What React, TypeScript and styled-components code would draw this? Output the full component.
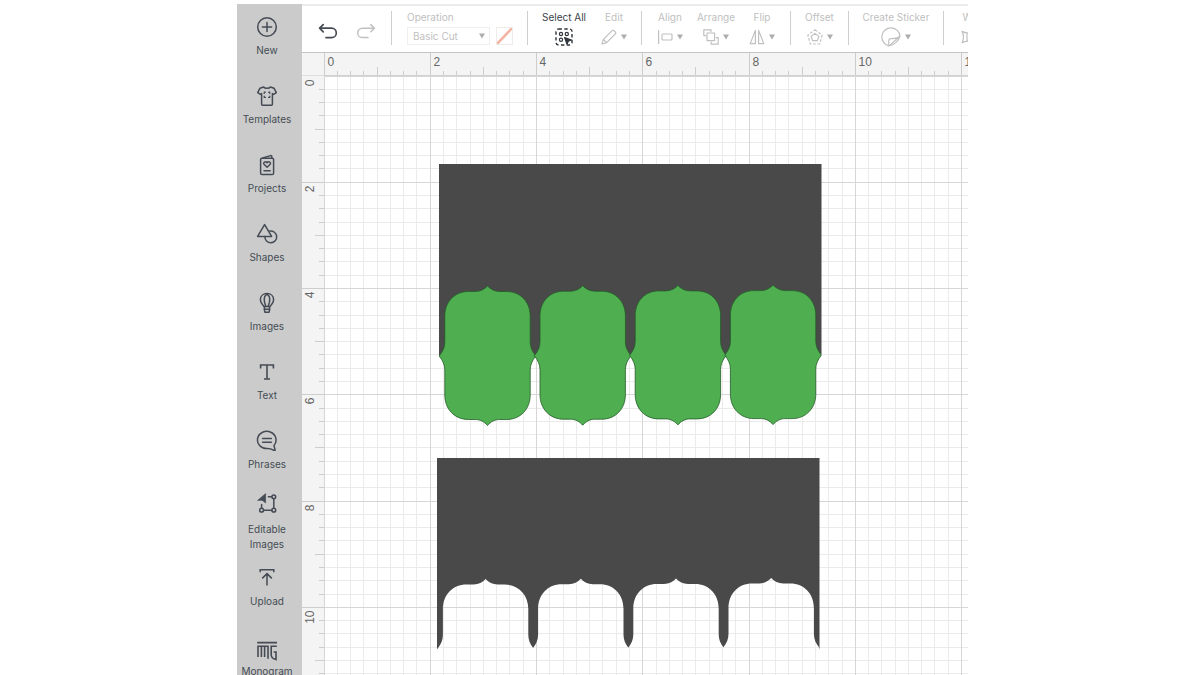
import React from "react";
import styled, { createGlobalStyle, css } from "styled-components";

const GlobalStyle = createGlobalStyle`
  *, *::before, *::after { box-sizing: border-box; }
  body {
    margin: 0;
    background: #fff;
    font-family: Inter, "Liberation Sans", sans-serif;
    overflow: hidden;
  }
  button { font: inherit; color: inherit; background: none; border: 0; padding: 0; cursor: pointer; }
`;

const ink = "#454b54";
const faded = "#c0c0c0";

/* ---------- page frame ---------- */

const Page = styled.div`
  display: flex;
  height: 100vh;
  padding: 4px 232px 0 237px;
  overflow: hidden;
`;

const Sidebar = styled.nav`
  flex: none;
  width: 65px;
  padding-right: 5px;
  background: #cbcbcb;
  color: ${ink};
  overflow: hidden;
`;

const Workspace = styled.main`
  flex: 1;
  min-width: 0;
  display: flex;
  flex-direction: column;
  overflow: hidden;
`;

/* ---------- sidebar ---------- */

const SideButton = styled.button<{ $top: number; $gap: number }>`
  display: flex;
  flex-direction: column;
  align-items: center;
  gap: ${(p) => p.$gap}px;
  width: 100%;
  padding: ${(p) => p.$top}px 0 15px;
  font-size: 10px;
  line-height: 15px;
  text-align: center;
`;

const SideIcon = styled.svg`
  width: 22px;
  height: 22px;
  fill: none;
  stroke: currentColor;
  stroke-width: 1.5;
  stroke-linecap: round;
  stroke-linejoin: round;
`;

const SideLabel = styled.span`
  white-space: pre-line;
`;

type SideItem = { label: string; icon: React.ReactNode; top?: number; gap?: number };

const sideItems: SideItem[] = [
  {
    label: "New",
    icon: (
      <>
        <circle cx="11" cy="11" r="9.3" />
        <path d="M11 6.4v9.2M6.4 11h9.2" />
      </>
    ),
  },
  {
    label: "Templates",
    icon: (
      <>
        <path d="M7.6 2C8.6 3.6 13.4 3.6 14.4 2L18 3.2 20.3 7.6 17.6 9.4 16.4 8.6V19.2Q16.4 20.2 15.4 20.2H6.6Q5.6 20.2 5.6 19.2V8.6L4.4 9.4 1.7 7.6 4 3.2Z" />
        <path d="M8.2 8.4V7.2H9.4M12.6 7.2H13.8V8.4M13.8 11.2V12.4H12.6M9.4 12.4H8.2V11.2" strokeWidth="1.2" />
      </>
    ),
  },
  {
    label: "Projects",
    icon: (
      <>
        <rect x="4.6" y="4.2" width="13" height="16.4" rx="1.4" />
        <path d="M6.6 4L14.6 1.6Q15.8 1.4 15.8 2.6V4" />
        <path d="M11.1 13.2L8 10.2C6.8 8.4 9.6 6.8 11.1 8.8 12.6 6.8 15.4 8.4 14.2 10.2Z" />
        <path d="M8 16.8h6.2" />
      </>
    ),
  },
  {
    label: "Shapes",
    icon: (
      <>
        <path d="M8.6 1.6L15.6 13.4H1.6Z" />
        <path d="M13.8 8.1A5.9 5.9 0 1 1 8.9 13.6" />
      </>
    ),
  },
  {
    label: "Images",
    icon: (
      <>
        <path d="M8.2 14.6C6 12.4 4.4 10.4 4.4 7.6 4.4 4 7.2 1.6 11 1.6S17.6 4 17.6 7.6C17.6 10.4 16 12.4 13.8 14.6Z" />
        <path d="M9.8 14.4C8 10 7.4 4.6 11 1.8 14.6 4.6 14 10 12.2 14.4" />
        <path d="M8.2 17.2H13.8L13 20.2H9ZM8.4 14.8V17M13.6 14.8V17" />
      </>
    ),
  },
  {
    label: "Text",
    icon: <path d="M4.6 7.4V4H17.4V7.4M11 4V18M8 18H14" strokeWidth="1.6" strokeLinecap="butt" strokeLinejoin="miter" />,
  },
  {
    label: "Phrases",
    icon: (
      <>
        <path d="M18 15.4A9.3 8.6 0 1 0 11 18.6Q15 18.6 17.4 20.2H19.2Q18.4 17.6 18 15.4Z" />
        <path d="M6.6 8.4h8.8M6.6 12.2h8.8" />
      </>
    ),
  },
  {
    label: "Editable\nImages",
    top: 6,
    gap: 7,
    icon: (
      <>
        <path d="M1.8 7.2L9.6 0.6V10L6.4 7.4Z" fill="currentColor" strokeWidth="0.6" />
        <circle cx="17.8" cy="3.8" r="1.9" />
        <circle cx="5.6" cy="17.2" r="1.9" />
        <circle cx="17.8" cy="17.2" r="1.9" />
        <path d="M12.4 3.8H15.8M17.8 5.8V15.2M7.6 17.2H15.8M5.6 11.4V15.2" />
      </>
    ),
  },
  {
    label: "Upload",
    top: 0,
    icon: <path d="M4.2 5.2V2.8H17.8V5.2M11 18.6V7M6.2 11.4L11 6.6 15.8 11.4" strokeWidth="1.5" strokeLinecap="butt" strokeLinejoin="miter" />,
  },
  {
    label: "Monogram",
    top: 16,
    gap: 2,
    icon: (
      <path
        d="M1.2 2.6H21M2 17V6.2H12V18.8M5.4 6.2V17M8.6 6.2V17M20.8 6.2H15.2V15Q15.4 18.4 20 19.6V12H17.6"
        strokeWidth="1.6"
        strokeLinecap="butt"
        strokeLinejoin="miter"
      />
    ),
  },
];

/* ---------- toolbar ---------- */

const Toolbar = styled.header`
  flex: none;
  display: flex;
  align-items: flex-start;
  height: 49px;
  padding-top: 5px;
  border-top: 2px solid #ebebeb;
  border-bottom: 1px solid #c6c6c6;
  overflow: hidden;
  color: ${faded};
  font-size: 10px;
  line-height: 12px;
`;

const Divider = styled.div`
  flex: none;
  width: 1px;
  height: 34px;
  background: #cfcfcf;
`;

const Group = styled.div<{ $left?: number; $right?: number }>`
  flex: none;
  display: flex;
  padding: 0 ${(p) => p.$right ?? 0}px 0 ${(p) => p.$left ?? 0}px;
`;

const History = styled(Group)`
  gap: 18px;
  padding: 11px 15px 0 16px;
`;

const HistoryButton = styled.button<{ $active?: boolean }>`
  width: 20px;
  height: 20px;
  color: ${(p) => (p.$active ? ink : faded)};
`;

const Tool = styled.button<{ $width: number; $active?: boolean }>`
  flex: none;
  display: flex;
  flex-direction: column;
  align-items: center;
  width: ${(p) => p.$width}px;
  white-space: nowrap;
  ${(p) =>
    p.$active &&
    css`
      color: #3c424a;
    `}
`;

const ToolIcons = styled.span`
  display: flex;
  align-items: center;
  gap: 4px;
  height: 27px;
`;

const Glyph = styled.svg`
  display: block;
  flex: none;
  fill: none;
  stroke: currentColor;
  stroke-width: 1.2;
  stroke-linecap: round;
  stroke-linejoin: round;
`;

const OperationField = styled.div`
  display: flex;
  flex-direction: column;
  gap: 4px;
`;

const OperationRow = styled.div`
  display: flex;
  gap: 6px;
`;

const SelectWrap = styled.div`
  display: flex;
  align-items: center;
  width: 83px;
  height: 18px;
  border: 1px solid #efefef;
`;

const Select = styled.select`
  appearance: none;
  flex: 1;
  min-width: 0;
  height: 16px;
  padding: 0 0 0 5px;
  border: 0;
  background: none;
  color: ${faded};
  opacity: 1;
  font: inherit;
`;

const Swatch = styled.button`
  width: 17px;
  height: 18px;
  border: 1px solid #f0ebe9;
`;

const Caret = () => (
  <Glyph width="6" height="6" viewBox="0 0 6 6">
    <path d="M0 0.4H6L3 5.4Z" fill="#adadad" stroke="none" />
  </Glyph>
);

const icons = {
  selectAll: (
    <Glyph width="18" height="18" viewBox="0 0 18 18" color="#30363d">
      <rect x="1" y="1" width="16" height="16" rx="2.5" strokeDasharray="3.4 2.4" strokeLinecap="butt" strokeWidth="1.4" />
      <circle cx="6" cy="6" r="1.6" />
      <circle cx="11.8" cy="6" r="1.6" />
      <circle cx="6" cy="11.8" r="1.6" />
      <path d="M9.6 9.6L16.4 12 13.2 13.2 12 16.2Z" fill="currentColor" />
    </Glyph>
  ),
  edit: (
    <Glyph width="16" height="16" viewBox="0 0 16 16">
      <path d="M1 15L2.4 10.4 11.2 1.6Q12 0.8 13 1.6L14.4 3Q15.2 4 14.4 4.8L5.6 13.6ZM2.6 10.6L5.4 13.4" />
    </Glyph>
  ),
  align: (
    <Glyph width="16" height="14" viewBox="0 0 16 14">
      <path d="M1.6 0.6V13.4" />
      <rect x="5" y="4" width="10" height="6" rx="1" />
    </Glyph>
  ),
  arrange: (
    <Glyph width="16" height="16" viewBox="0 0 16 16">
      <rect x="4" y="4" width="7.6" height="7.6" />
      <path d="M2.6 6.6H0.8V0.8H8V2.6M13.2 8.6H15.2V15.2H8.2V13" />
    </Glyph>
  ),
  flip: (
    <Glyph width="16" height="16" viewBox="0 0 16 16">
      <path d="M6.4 1.4V14.6H1.2ZM9.6 1.4V14.6H14.8Z" />
    </Glyph>
  ),
  offset: (
    <Glyph width="16" height="16" viewBox="0 0 16 16">
      <path d="M8 0.8L15.2 6.2 12.6 15H3.4L0.8 6.2Z" strokeDasharray="2.6 1.8" strokeLinecap="butt" />
      <path d="M8 4.4L11.8 7.4 10.4 11.6H5.6L4.2 7.4Z" />
    </Glyph>
  ),
  sticker: (
    <Glyph width="20" height="20" viewBox="0 0 20 20">
      <path d="M7.8 18.8A9.1 9.1 0 1 1 19 9.4C17.8 13.8 12.6 18.4 7.8 18.8ZM7.8 18.8V13.2Q8 11.8 9.4 11.6Q15.6 12 19 9.4M9.6 17.6L17 10.8" />
    </Glyph>
  ),
  warp: (
    <Glyph width="18" height="14" viewBox="0 0 18 14">
      <path d="M1 1.4Q9 5 17 1.4Q14 7 17 12.6Q9 9.6 1 12.6Q4 7 1 1.4ZM6 3V11" />
    </Glyph>
  ),
};

const ToolItem = ({
  label,
  icon,
  width,
  active,
  caret = true,
}: {
  label: string;
  icon: React.ReactNode;
  width: number;
  active?: boolean;
  caret?: boolean;
}) => (
  <Tool $width={width} $active={active}>
    {label}
    <ToolIcons>
      {icon}
      {caret && <Caret />}
    </ToolIcons>
  </Tool>
);

/* ---------- rulers and artboard ---------- */

const INCH = 53.13;

const Board = styled.div`
  flex: 1;
  min-height: 0;
  display: grid;
  grid-template: 23px minmax(0, 1fr) / 22px minmax(0, 1fr);
  overflow: hidden;
`;

const Corner = styled.div`
  background: #f4f4f4;
  border-bottom: 1px solid #dedede;
`;

const Drawing = styled.svg<{ $ruler?: boolean }>`
  display: block;
  width: 100%;
  height: 100%;
  overflow: hidden;
  background: ${(p) => (p.$ruler ? "#f4f4f4" : "#fff")};
  text {
    font: 12px "Liberation Sans", Arial, sans-serif;
    fill: #666;
  }
`;

const ticks = Array.from({ length: 65 }, (_, i) => i);
const tickLength = (i: number, full: number) => (i % 8 === 0 ? full : i % 4 === 0 ? 9 : 5);

const TopRuler = () => (
  <Drawing $ruler aria-label="Horizontal ruler">
    {ticks.map((i) => {
      const x = Math.floor((i * INCH) / 4) + 0.5;
      return (
        <g key={i}>
          <path d={`M${x} 23V${23 - tickLength(i, 23)}`} stroke="#cdcdcd" />
          {i % 8 === 0 && (
            <text x={x + 3} y="13">
              {i / 4}
            </text>
          )}
        </g>
      );
    })}
    <path d="M0 22.5H4000" stroke="#d2d2d2" />
  </Drawing>
);

const LeftRuler = () => (
  <Drawing $ruler aria-label="Vertical ruler">
    {ticks.map((i) => {
      const y = Math.floor((i * INCH) / 4) + 0.5;
      return (
        <g key={i}>
          {i > 0 && <path d={`M22 ${y}H${22 - tickLength(i, 22)}`} stroke="#cdcdcd" />}
          {i % 8 === 0 && (
            <text transform={`translate(12 ${y + 3}) rotate(-90)`} textAnchor="end">
              {i / 4}
            </text>
          )}
        </g>
      );
    })}
  </Drawing>
);

/* Upper outline of one label shape, drawn right to left between its two side points. */
const upperEdge = (cx: number, cy: number) => {
  const p = (x: number, y: number) => `${cx + x} ${cy + y}`;
  return (
    `L${p(47.6, -1)}C${p(44.5, -5)} ${p(42.7, -9)} ${p(42.7, -14)}V${cy - 40}` +
    `C${p(42.7, -54)} ${p(33, -64.5)} ${p(19, -64.5)}H${cx + 12}` +
    `C${p(7, -64.5)} ${p(3, -67)} ${p(0, -70)}` +
    `C${p(-3, -67)} ${p(-7, -64.5)} ${p(-12, -64.5)}H${cx - 19}` +
    `C${p(-33, -64.5)} ${p(-42.7, -54)} ${p(-42.7, -40)}V${cy - 14}` +
    `C${p(-42.7, -9)} ${p(-44.5, -5)} ${p(-47.6, -1)}`
  );
};

const lowerEdge = (cx: number, cy: number) => {
  const p = (x: number, y: number) => `${cx + x} ${cy + y}`;
  return (
    `L${p(-48.3, 0)}C${p(-44.5, 5)} ${p(-42.7, 9)} ${p(-42.7, 14)}V${cy + 39}` +
    `C${p(-42.7, 53)} ${p(-33, 63.5)} ${p(-19, 63.5)}H${cx - 12}` +
    `C${p(-7, 63.5)} ${p(-3, 66)} ${p(0, 69.5)}` +
    `C${p(3, 66)} ${p(7, 63.5)} ${p(12, 63.5)}H${cx + 19}` +
    `C${p(33, 63.5)} ${p(42.7, 53)} ${p(42.7, 39)}V${cy + 14}` +
    `C${p(42.7, 9)} ${p(44.5, 5)} ${p(48.3, 0)}Z`
  );
};

const columns = [0, 1, 2, 3].map((i) => ({ dx: i * 95.2, dy: i * -0.3 }));

const labelPath = (cx: number, cy: number) => `M${cx + 48.3} ${cy}` + upperEdge(cx, cy) + lowerEdge(cx, cy);

const cutPanel =
  "M113 382H495.5V573.5" +
  [...columns].reverse().map((c) => upperEdge(161.6 + c.dx, 573 + c.dy)).join("") +
  "L113 573.5Z";

const Artboard = () => (
  <Drawing role="img" aria-label="Artboard">
    {ticks.map((i) => {
      const at = Math.floor((i * INCH) / 4) + 0.5;
      return <path key={i} d={`M${at} 0V4000M0 ${at}H4000`} stroke="#ebebeb" />;
    })}
    {ticks
      .filter((i) => i % 8 === 0)
      .map((i) => {
        const at = Math.floor((i * INCH) / 4) + 0.5;
        return <path key={i} d={`M${at} 0V4000M0 ${at}H4000`} stroke="#d6d6d6" />;
      })}
    <path d="M115 88H497.5V278L306 279 115 279Z" fill="#494949" />
    {columns.map((c) => (
      <path key={c.dx} d={labelPath(163.5 + c.dx, 280 + c.dy)} fill="#4fae50" stroke="#235c28" strokeWidth="0.8" />
    ))}
    <path d={cutPanel} fill="#494949" />
  </Drawing>
);

export default function App() {
  return (
    <>
      <GlobalStyle />
      <Page>
        <Sidebar aria-label="Design panel">
          {sideItems.map((item) => (
            <SideButton key={item.label} $top={item.top ?? 12} $gap={item.gap ?? 5}>
              <SideIcon viewBox="0 0 22 22">{item.icon}</SideIcon>
              <SideLabel>{item.label}</SideLabel>
            </SideButton>
          ))}
        </Sidebar>
        <Workspace>
          <Toolbar>
            <History>
              <HistoryButton $active aria-label="Undo">
                <Glyph width="20" height="20" viewBox="0 0 20 20">
                  <path d="M5.2 2.6L1.6 6.2 5.2 9.8M1.8 6.2H13.6A4.7 4.7 0 0 1 13.6 15.6H8" strokeWidth="1.7" />
                </Glyph>
              </HistoryButton>
              <HistoryButton aria-label="Redo">
                <Glyph width="20" height="20" viewBox="0 0 20 20">
                  <path d="M14.8 2.6L18.4 6.2 14.8 9.8M18.2 6.2H6.4A4.7 4.7 0 0 0 6.4 15.6H12" strokeWidth="1.5" />
                </Glyph>
              </HistoryButton>
            </History>
            <Divider />
            <Group $left={15} $right={14}>
              <OperationField>
                <label htmlFor="operation">Operation</label>
                <OperationRow>
                  <SelectWrap>
                    <Select id="operation" disabled defaultValue="Basic Cut">
                      <option>Basic Cut</option>
                    </Select>
                    <Group $right={4}>
                      <Caret />
                    </Group>
                  </SelectWrap>
                  <Swatch aria-label="Cut colour">
                    <Glyph width="15" height="16" viewBox="0 0 15 16">
                      <path d="M0.8 15L14.2 1" stroke="#f3b5a4" strokeWidth="2.6" />
                    </Glyph>
                  </Swatch>
                </OperationRow>
              </OperationField>
            </Group>
            <Divider />
            <Group $right={13}>
              <ToolItem width={72} label="Select All" icon={icons.selectAll} active caret={false} />
              <ToolItem width={28} label="Edit" icon={icons.edit} />
            </Group>
            <Divider />
            <Group $left={10} $right={10}>
              <ToolItem width={36} label="Align" icon={icons.align} />
              <ToolItem width={56} label="Arrange" icon={icons.arrange} />
              <ToolItem width={36} label="Flip" icon={icons.flip} />
            </Group>
            <Divider />
            <ToolItem width={57} label="Offset" icon={icons.offset} />
            <Divider />
            <ToolItem width={94} label="Create Sticker" icon={icons.sticker} />
            <Divider />
            <Group $left={17}>
              <ToolItem width={28} label="Warp" icon={icons.warp} />
            </Group>
          </Toolbar>
          <Board>
            <Corner />
            <TopRuler />
            <LeftRuler />
            <Artboard />
          </Board>
        </Workspace>
      </Page>
    </>
  );
}
